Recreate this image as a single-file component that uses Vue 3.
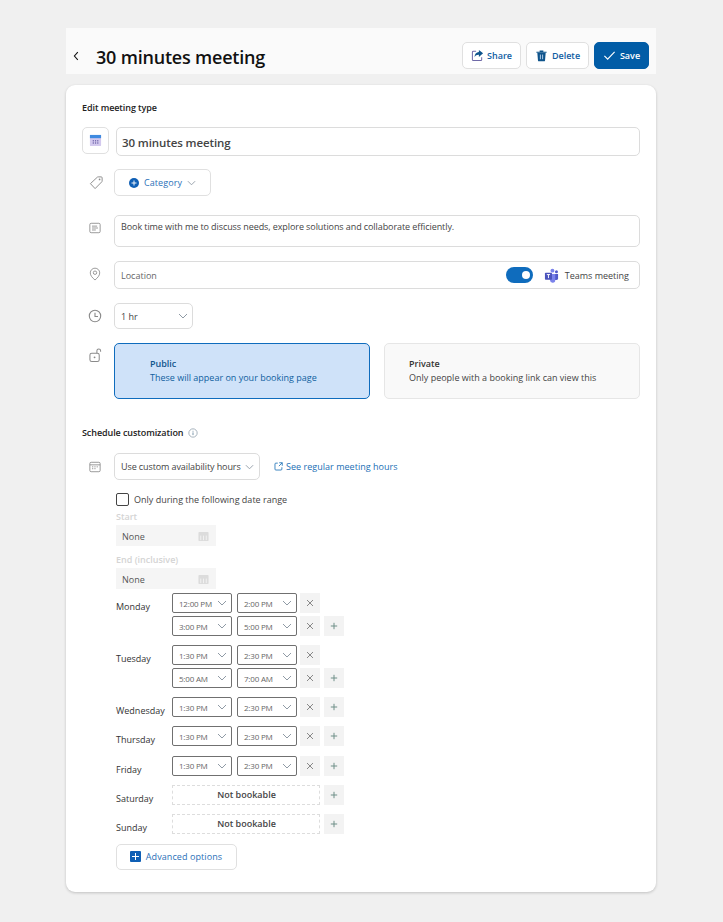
<script setup>
const days = [
  { name: 'Monday', slots: [{ from: '12:00 PM', to: '2:00 PM', plus: false }, { from: '3:00 PM', to: '5:00 PM', plus: true }] },
  { name: 'Tuesday', slots: [{ from: '1:30 PM', to: '2:30 PM', plus: false }, { from: '5:00 AM', to: '7:00 AM', plus: true }] },
  { name: 'Wednesday', slots: [{ from: '1:30 PM', to: '2:30 PM', plus: true }] },
  { name: 'Thursday', slots: [{ from: '1:30 PM', to: '2:30 PM', plus: true }] },
  { name: 'Friday', slots: [{ from: '1:30 PM', to: '2:30 PM', plus: true }] },
  { name: 'Saturday', slots: [] },
  { name: 'Sunday', slots: [] },
];
</script>

<template>
  <div class="page">
    <header class="topbar">
      <div class="title-wrap">
        <svg class="back" viewBox="0 0 8 12" width="8" height="12"><path d="M5.800 2.200 2.400 6l3.400 3.800" fill="none" stroke="#111" stroke-width="1.100" /></svg>
        <h1>30 minutes meeting</h1>
      </div>
      <div class="actions">
        <button class="btn share">
          <svg viewBox="0 0 14 14" width="13" height="13">
            <path d="M5.500 2.500H2.500a1 1 0 0 0-1 1v8a1 1 0 0 0 1 1h8a1 1 0 0 0 1-1V9" fill="none" stroke="#6f6aa8" stroke-width="1.100" />
            <path d="M8.500 1v2.300C5.500 3.500 4 5.500 3.800 8.800 5 6.800 6.500 6 8.500 6.200v2.300L13 4.700z" fill="#0f548c" />
          </svg>
          Share
        </button>
        <button class="btn delete">
          <svg viewBox="0 0 14 14" width="13" height="13">
            <path d="M1.500 3h11v1h-11zM5 1.500h4V3H5z" fill="#0f548c" />
            <path d="M2.500 4h9l-.7 8.300a1.100 1.100 0 0 1-1.100 1H4.300a1.100 1.100 0 0 1-1.100-1z" fill="#0f548c" />
            <path d="M5.800 6v5M8.200 6v5" stroke="#cfe2f9" stroke-width=".9" />
          </svg>
          Delete
        </button>
        <button class="btn save">
          <svg viewBox="0 0 14 14" width="13" height="13"><path d="M1.500 7.500 5 11l7.500-8" fill="none" stroke="#fff" stroke-width="1.200" /></svg>
          Save
        </button>
      </div>
    </header>

    <main class="card">
      <h2 class="section-title">Edit meeting type</h2>

      <div class="name-row">
        <div class="icon-box">
          <svg viewBox="0 0 14 14" width="13" height="13">
            <rect x="1" y="1" width="12" height="12" rx="1" fill="#d3c9ee" />
            <rect x="1" y="1" width="12" height="3.500" fill="#3f8ae0" />
            <path d="M4 6.500h1.300v1.500H4zM6.400 6.500h1.300v1.500H6.400zM8.800 6.500h1.300v1.500H8.800zM4 9h1.300v1.500H4zM6.400 9h1.300v1.500H6.400zM8.800 9h1.300v1.500H8.800z" fill="#7a6fb0" />
          </svg>
        </div>
        <div class="name-input">30 minutes meeting</div>
      </div>

      <div class="row category-row">
        <span class="row-icon tag-icon">
          <svg viewBox="0 0 16 16" width="15" height="15"><path d="M1.500 9.200 8.800 2.400a1.500 1.500 0 0 1 1-.4h3.200a1 1 0 0 1 1 1v3.300a1.500 1.500 0 0 1-.4 1L6.500 14.500z" fill="none" stroke="#8a8a8a" stroke-width="1" /><circle cx="11.300" cy="4.700" r=".9" fill="#8a8a8a" /></svg>
        </span>
        <button class="btn category">
          <svg viewBox="0 0 12 12" width="10" height="10"><circle cx="6" cy="6" r="6" fill="#0f5fb5" /><path d="M6 3v6M3 6h6" stroke="#fff" stroke-width="1.100" /></svg>
          <span>Category</span>
          <svg class="chev" viewBox="0 0 10 6" width="9" height="6"><path d="M1 1l4 4 4-4" fill="none" stroke="#8f9aa5" /></svg>
        </button>
      </div>

      <div class="row description-row">
        <span class="row-icon icon-top">
          <svg viewBox="0 0 14 14" width="12" height="12"><rect x="1" y="1.500" width="12" height="11" rx="1.500" fill="none" stroke="#8a8a8a" /><path d="M3.500 4.800h6M3.500 7h7M3.500 9.300h4.500" stroke="#8a8a8a" /></svg>
        </span>
        <div class="description">Book time with me to discuss needs, explore solutions and collaborate efficiently.</div>
      </div>

      <div class="row location-row">
        <span class="row-icon">
          <svg viewBox="0 0 14 16" width="12" height="14"><path d="M7 15C4 12.500 1.500 9.800 1.500 6.700a5.500 5.500 0 0 1 11 0C12.500 9.800 10 12.500 7 15z" fill="none" stroke="#8a8a8a" /><circle cx="7" cy="6.500" r="2" fill="none" stroke="#8a8a8a" /></svg>
        </span>
        <div class="location">
          <span class="location-label">Location</span>
          <span class="toggle"><span class="toggle-dot" /></span>
          <svg class="teams" viewBox="0 0 16 16" width="15" height="15">
            <circle cx="9" cy="2.800" r="2.100" fill="#7b83eb" />
            <circle cx="13.300" cy="4" r="1.600" fill="#5059c9" />
            <path d="M11 6.300h4v4.500a2 2 0 0 1-2 2h-2z" fill="#5059c9" />
            <path d="M5.500 6.300h6.500v6.400a2.800 2.800 0 0 1-5.600.300z" fill="#7b83eb" />
            <rect x="1" y="5" width="7.500" height="7.500" rx=".8" fill="#4b53bc" />
            <path d="M3 7h3.500M4.750 7v3.800" stroke="#fff" stroke-width="1" />
          </svg>
          <span class="teams-label">Teams meeting</span>
        </div>
      </div>

      <div class="row duration-row">
        <span class="row-icon">
          <svg viewBox="0 0 14 14" width="14" height="14"><circle cx="7" cy="7" r="5.700" fill="none" stroke="#8a8a8a" stroke-width="1.100" /><path d="M7 3.800V7.500h3" fill="none" stroke="#8a8a8a" stroke-width="1.100" /></svg>
        </span>
        <div class="select duration">
          <span>1 hr</span>
          <svg class="chev" viewBox="0 0 10 6" width="10" height="6"><path d="M1 1l4 4 4-4" fill="none" stroke="#8f9aa5" /></svg>
        </div>
      </div>

      <div class="row visibility-row">
        <span class="row-icon icon-top">
          <svg viewBox="0 0 14 16" width="13" height="15"><rect x="1" y="5.500" width="10" height="9" rx="2" fill="none" stroke="#8a8a8a" stroke-width="1.100" /><circle cx="6" cy="10" r="1" fill="#8a8a8a" /><path d="M8.500 5.500V3a2 2 0 0 1 4 0v1" fill="none" stroke="#8a8a8a" stroke-width="1.100" /></svg>
        </span>
        <div class="visibility">
          <div class="choice selected">
            <strong>Public</strong>
            <span>These will appear on your booking page</span>
          </div>
          <div class="choice">
            <strong>Private</strong>
            <span>Only people with a booking link can view this</span>
          </div>
        </div>
      </div>

      <h2 class="section-title schedule-title">
        Schedule customization
        <svg viewBox="0 0 12 12" width="10" height="10"><circle cx="6" cy="6" r="5" fill="none" stroke="#8a9aa8" stroke-width=".9" /><path d="M6 5.300v3.200M6 3.400v1" stroke="#5f7f98" /></svg>
      </h2>

      <div class="row availability-row">
        <span class="row-icon">
          <svg viewBox="0 0 14 14" width="12" height="12"><rect x="1" y="1.500" width="12" height="11" rx="1.500" fill="none" stroke="#8a8a8a" /><path d="M1 4.500h12" stroke="#8a8a8a" /><path d="M3.500 6.800h1.500M6.200 6.800h1.500M8.900 6.800h1.500M3.500 9h1.500M6.200 9h1.500" stroke="#8a8a8a" /></svg>
        </span>
        <div class="select availability">
          <span>Use custom availability hours</span>
          <svg class="chev" viewBox="0 0 10 6" width="9" height="6"><path d="M1 1l4 4 4-4" fill="none" stroke="#8f9aa5" /></svg>
        </div>
        <a class="link">
          <svg viewBox="0 0 12 12" width="9" height="9"><path d="M5 1.500H2.500a1.200 1.200 0 0 0-1.200 1.200v6.800a1.200 1.200 0 0 0 1.200 1.200h6.800a1.200 1.200 0 0 0 1.200-1.200V7M7 1h4v4M11 1 6.500 5.500" fill="none" stroke="#1a6fb5" stroke-width="1.100" /></svg>
          See regular meeting hours
        </a>
      </div>

      <div class="schedule">
        <label class="check"><span class="box" />Only during the following date range</label>

        <div class="date-label start">Start</div>
        <div class="date-input">
          <span>None</span>
          <svg viewBox="0 0 12 12" width="11" height="11"><rect x=".5" y="1" width="11" height="10" rx="1" fill="#dcdcdc" /><path d="M3 5v5M6 5v5M9 5v5" stroke="#f3f3f3" /></svg>
        </div>
        <div class="date-label end">End (inclusive)</div>
        <div class="date-input">
          <span>None</span>
          <svg viewBox="0 0 12 12" width="11" height="11"><rect x=".5" y="1" width="11" height="10" rx="1" fill="#dcdcdc" /><path d="M3 5v5M6 5v5M9 5v5" stroke="#f3f3f3" /></svg>
        </div>

        <div class="days">
          <div v-for="day in days" :key="day.name" class="day">
            <div class="day-name">{{ day.name }}</div>
            <div class="slots">
              <div v-for="slot in day.slots" :key="slot.from" class="slot">
                <div class="time">
                  <span>{{ slot.from }}</span>
                  <svg class="chev" viewBox="0 0 10 6" width="10" height="6"><path d="M1 1l4 4 4-4" fill="none" stroke="#8f9aa5" /></svg>
                </div>
                <div class="time">
                  <span>{{ slot.to }}</span>
                  <svg class="chev" viewBox="0 0 10 6" width="10" height="6"><path d="M1 1l4 4 4-4" fill="none" stroke="#8f9aa5" /></svg>
                </div>
                <span class="square">
                  <svg viewBox="0 0 8 8" width="8" height="8"><path d="M1 1l6 6M7 1 1 7" stroke="#888" /></svg>
                </span>
                <span v-if="slot.plus" class="square">
                  <svg viewBox="0 0 8 8" width="8" height="8"><path d="M4 .8v6.400M.8 4h6.400" stroke="#6f8f88" /></svg>
                </span>
              </div>
              <div v-if="!day.slots.length" class="slot">
                <div class="closed">Not bookable</div>
                <span class="square">
                  <svg viewBox="0 0 8 8" width="8" height="8"><path d="M4 .8v6.400M.8 4h6.400" stroke="#6f8f88" /></svg>
                </span>
              </div>
            </div>
          </div>
        </div>

        <button class="btn advanced">
          <svg viewBox="0 0 11 11" width="11" height="11"><rect width="11" height="11" rx="1" fill="#0f5fb5" /><path d="M5.500 2v7M2 5.500h7" stroke="#fff" /></svg>
          Advanced options
        </button>
      </div>
    </main>
  </div>
</template>

<style>
html,
body {
  background: #f0f0f0;
}
</style>

<style scoped>
.page {
  box-sizing: border-box;
  width: 723px;
  height: 922px;
  padding: 28px 67px 30px 66px;
  background: #f0f0f0;
  color: #333;
  font-family: "Open Sans", "Noto Sans", sans-serif;
  font-size: 9px;
}

.topbar {
  display: flex;
  align-items: flex-end;
  justify-content: space-between;
  height: 46px;
  padding: 0 7px 5px 6px;
  box-sizing: border-box;
  background: #fafafa;
}

.title-wrap {
  display: flex;
  align-items: center;
  gap: 16px;
  margin-bottom: -1px;
}

.back {
  margin-top: -3px;
}

h1 {
  margin: 0;
  color: #111;
  font-size: 18px;
  font-weight: 600;
  line-height: 26px;
  letter-spacing: -0.2px;
}

.actions {
  display: flex;
  gap: 5px;
}

.btn {
  display: inline-flex;
  align-items: center;
  justify-content: center;
  box-sizing: border-box;
  border: 1px solid #e0e0e0;
  border-radius: 5px;
  background: #fff;
  color: #115ea3;
  font-family: inherit;
  font-size: 9px;
  font-weight: 600;
}

.share {
  gap: 3px;
  width: 59px;
  height: 27px;
}

.delete {
  gap: 4px;
  width: 63px;
  height: 27px;
}

.save {
  gap: 4px;
  width: 55px;
  height: 27px;
  border-color: #015ca6;
  background: #015ca6;
  color: #fff;
}

.card {
  box-sizing: border-box;
  height: 807px;
  margin-top: 11px;
  padding: 16px 16px 0;
  border-radius: 9px;
  background: #fff;
  box-shadow: 0 1px 3px rgba(0, 0, 0, 0.2);
}

.section-title {
  display: flex;
  align-items: center;
  gap: 5px;
  margin: 0;
  color: #222;
  font-size: 9px;
  font-weight: 600;
  line-height: 13px;
  letter-spacing: -0.08px;
}

.name-row {
  display: flex;
  gap: 7px;
  margin-top: 13px;
}

.icon-box {
  display: flex;
  flex: none;
  align-items: center;
  justify-content: center;
  box-sizing: border-box;
  width: 27px;
  height: 27px;
  border: 1px solid #e0e0e0;
  border-radius: 5px;
}

.name-input {
  flex: 1;
  box-sizing: border-box;
  height: 29px;
  padding: 1px 5px 0;
  border: 1px solid #dcdcdc;
  border-radius: 5px;
  color: #444;
  font-size: 11.5px;
  font-weight: 600;
  line-height: 28px;
  letter-spacing: -0.1px;
}

.row {
  display: flex;
  align-items: center;
}

.row-icon {
  display: flex;
  flex: none;
  justify-content: center;
  width: 26px;
  margin-right: 6px;
}

.tag-icon {
  width: 28px;
  margin-right: 4px;
}

.icon-top {
  align-self: flex-start;
}

.category-row {
  margin-top: 13px;
}

.category {
  gap: 5px;
  width: 97px;
  height: 27px;
  color: #2a70b8;
  font-weight: 400;
  letter-spacing: 0.1px;
}

.description-row {
  margin-top: 19px;
}

.description-row .icon-top {
  padding-top: 7px;
}

.description {
  flex: 1;
  box-sizing: border-box;
  height: 32px;
  padding: 4px 6px;
  border: 1px solid #dcdcdc;
  border-radius: 5px;
  color: #444;
  line-height: 13px;
  letter-spacing: -0.085px;
}

.location-row {
  margin-top: 14px;
}

.location-row .row-icon {
  margin-top: -3px;
}

.location {
  display: flex;
  flex: 1;
  align-items: center;
  box-sizing: border-box;
  height: 28px;
  padding: 0 10px 0 6px;
  border: 1px solid #dcdcdc;
  border-radius: 5px;
}

.location-label {
  flex: 1;
  color: #666;
}

.toggle {
  display: flex;
  align-items: center;
  justify-content: flex-end;
  box-sizing: border-box;
  width: 27px;
  height: 16px;
  padding-right: 3px;
  border-radius: 8px;
  background: #0f6cbd;
}

.toggle-dot {
  width: 8px;
  height: 8px;
  border-radius: 50%;
  background: #fff;
}

.teams {
  margin: 0 6px 0 11px;
}

.teams-label {
  color: #444;
}

.duration-row {
  margin-top: 14px;
}

.select {
  display: flex;
  align-items: center;
  justify-content: space-between;
  box-sizing: border-box;
  border: 1px solid #dcdcdc;
  border-radius: 5px;
  color: #444;
}

.duration {
  width: 79px;
  height: 26px;
  padding: 0 4px 0 6px;
}

.visibility-row {
  margin-top: 14px;
}

.visibility-row .icon-top {
  padding-top: 5px;
}

.visibility {
  display: grid;
  flex: 1;
  grid-template-columns: 1fr 1fr;
  gap: 14px;
}

.choice {
  display: flex;
  flex-direction: column;
  justify-content: center;
  box-sizing: border-box;
  height: 56px;
  padding: 0 24px;
  border: 1px solid #e6e6e6;
  border-radius: 5px;
  background: #f9f9f9;
  color: #444;
  line-height: 14px;
}

.choice strong {
  color: #333;
  font-weight: 600;
}

.selected {
  padding: 0 35px;
  border-color: #0f6cbd;
  background: #cfe2f9;
  color: #0f5f9f;
}

.selected strong {
  color: #0f548c;
}

.schedule-title {
  margin-top: 27px;
}

.availability-row {
  margin-top: 14px;
}

.availability {
  width: 146px;
  height: 27px;
  padding: 0 5px 0 6px;
  letter-spacing: -0.1px;
}

.link {
  display: inline-flex;
  align-items: center;
  gap: 3px;
  margin-top: -1px;
  margin-left: 14px;
  color: #1a6fb5;
  font-weight: 500;
  letter-spacing: 0.03px;
}

.schedule {
  padding-left: 34px;
}

.check {
  display: flex;
  align-items: center;
  gap: 5px;
  margin-top: 13px;
  color: #444;
  line-height: 13px;
}

.box {
  box-sizing: border-box;
  width: 13px;
  height: 13px;
  border: 1px solid #444;
  border-radius: 2px;
}

.date-label {
  height: 12px;
  color: #d4d4d4;
  font-weight: 600;
  line-height: 12px;
}

.start {
  margin-top: 5px;
}

.end {
  margin-top: 8px;
}

.date-input {
  display: flex;
  align-items: center;
  justify-content: space-between;
  box-sizing: border-box;
  width: 100px;
  height: 21px;
  margin-top: 2px;
  padding: 1px 7px 0 6px;
  background: #f5f5f5;
  color: #555;
}

.days {
  display: flex;
  flex-direction: column;
  gap: 9.13px;
  margin-top: 4px;
}

.day {
  display: flex;
}

.day-name {
  width: 56px;
  padding-top: 7px;
  color: #333;
  line-height: 13px;
}

.slots {
  display: flex;
  flex-direction: column;
  gap: 3px;
}

.slot {
  display: flex;
  gap: 4px;
}

.time {
  display: flex;
  align-items: center;
  justify-content: space-between;
  box-sizing: border-box;
  width: 60px;
  height: 20px;
  margin-right: 1px;
  padding: 0 4px 0 6px;
  border: 1px solid #707070;
  border-radius: 2px;
  color: #666;
  font-size: 8px;
  letter-spacing: -0.2px;
}

.time + .time {
  margin-right: -1px;
}

.square {
  display: flex;
  align-items: center;
  justify-content: center;
  width: 20px;
  height: 20px;
  background: #f3f3f3;
}

.closed {
  box-sizing: border-box;
  width: 148px;
  height: 20px;
  padding-left: 1px;
  border: 1px dashed #ddd;
  color: #444;
  font-weight: 600;
  line-height: 18px;
  text-align: center;
}

.advanced {
  gap: 5px;
  width: 121px;
  height: 26px;
  margin-top: 10px;
  padding-right: 7px;
  color: #2a70b8;
  font-weight: 400;
  letter-spacing: 0.08px;
}
</style>
